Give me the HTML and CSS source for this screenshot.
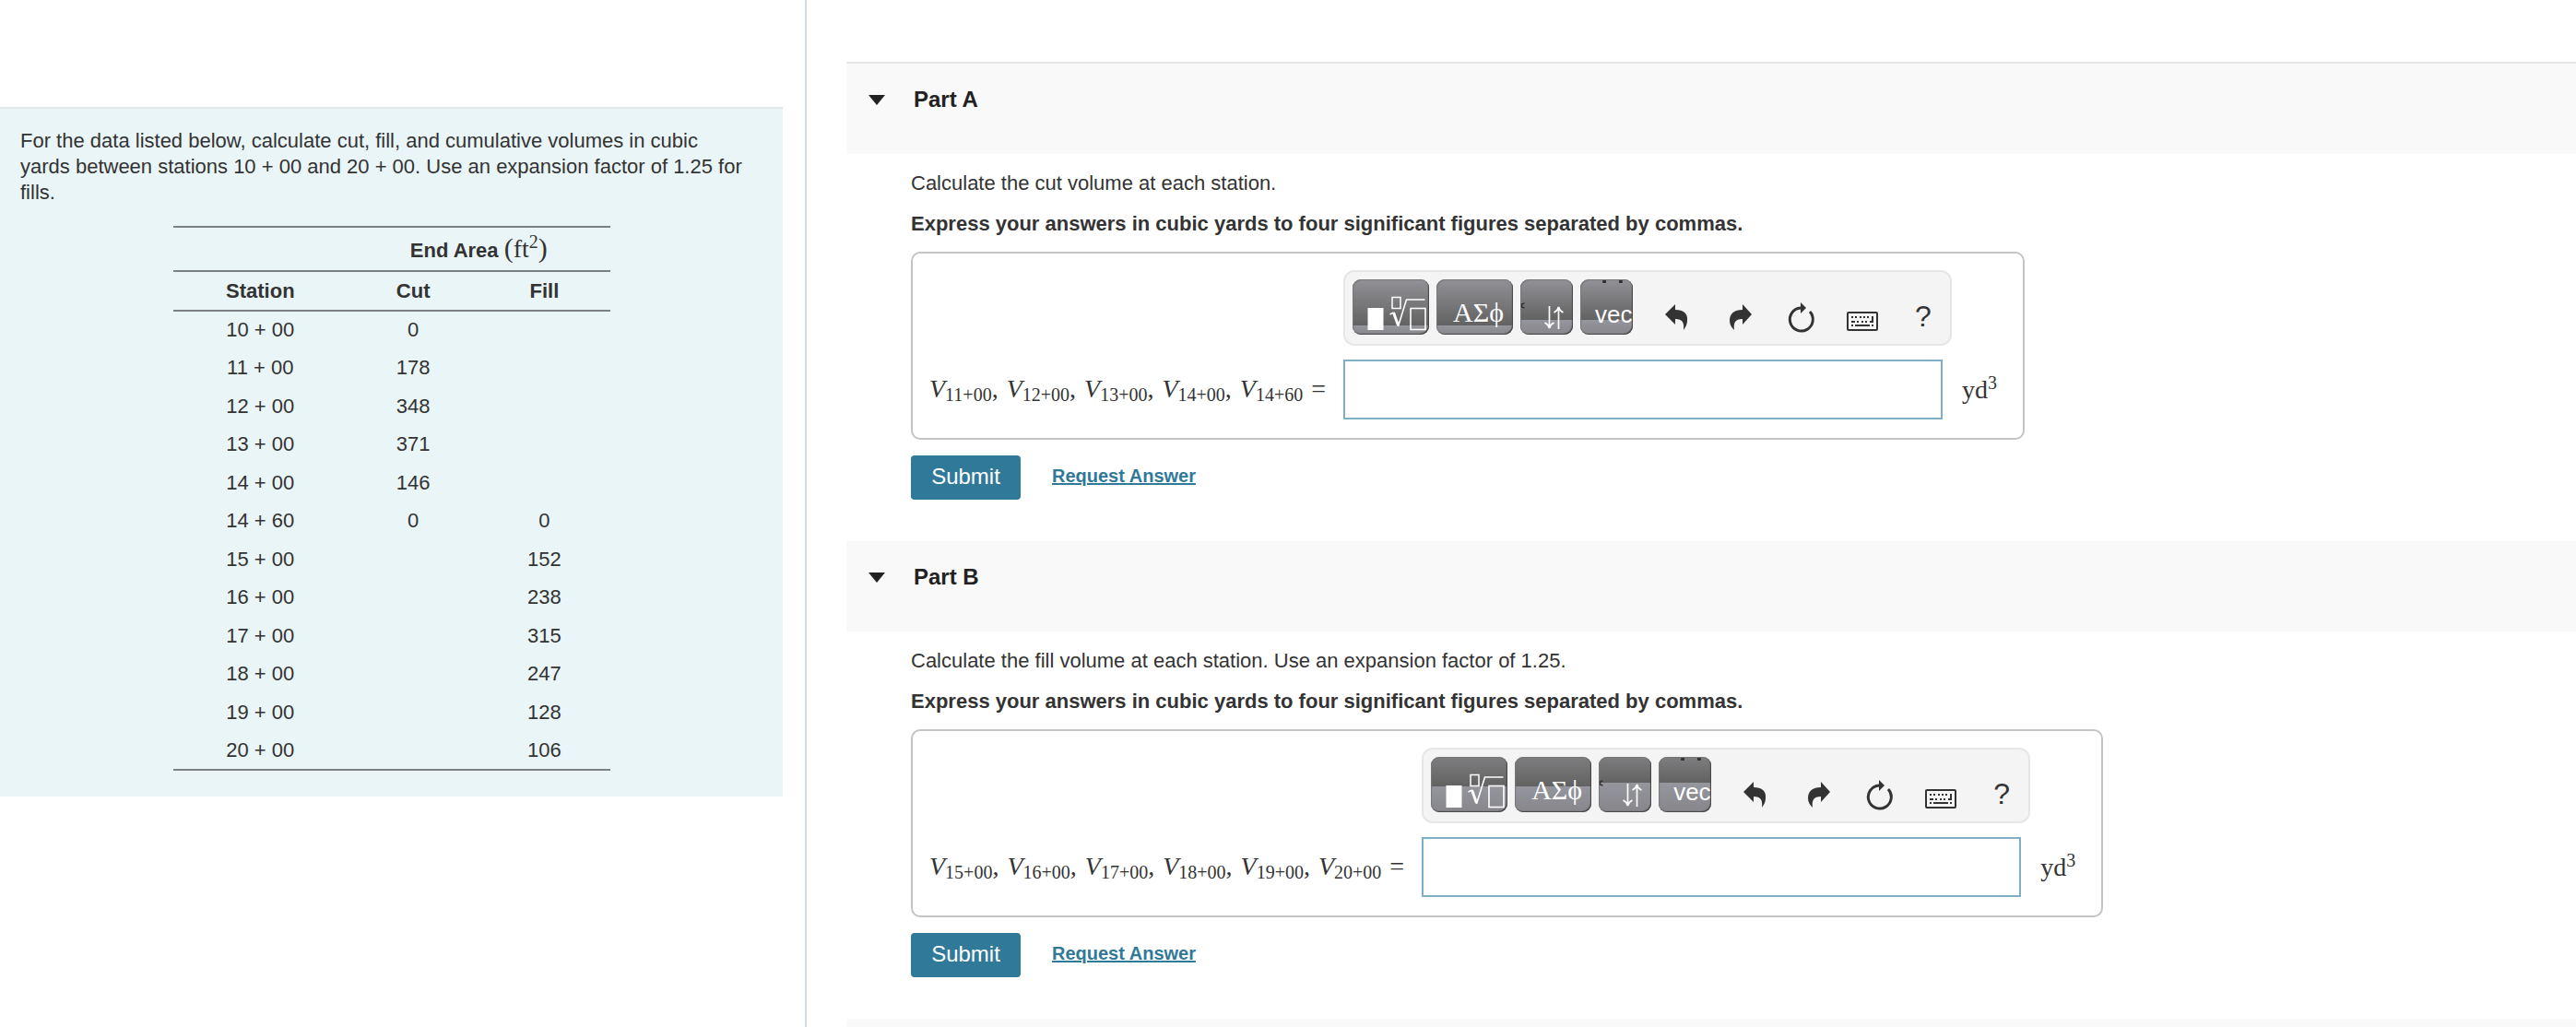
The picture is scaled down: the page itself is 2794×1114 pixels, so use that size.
FILE: index.html
```html
<!DOCTYPE html>
<html lang="en">
<head>
    <meta charset="UTF-8">
    <meta name="viewport" content="width=device-width, initial-scale=1.0">
    <title>Cut and Fill Volumes</title>
    <link rel="stylesheet" href="styles.css">
</head>
<body>
    <!-- shared toolbar icons -->
    <svg class="sprite" aria-hidden="true">
        <symbol id="icon-root" viewBox="0 0 82 60">
            <rect x="16" y="31" width="17" height="24" fill="#fff"/>
            <g fill="none" stroke="#fff">
                <rect x="42.5" y="19.5" width="9" height="12" stroke-width="1.5"/>
                <path d="M40 38l4-2" stroke-width="1.5"/>
                <path d="M44 36l5 14" stroke-width="3"/>
                <path d="M49 51l9-29h20" stroke-width="1.6"/>
                <rect x="62.5" y="31.5" width="16" height="23" stroke-width="1.6"/>
            </g>
        </symbol>
        <symbol id="icon-arrows" viewBox="0 0 56 60">
            <path d="M4 26l-3 1v3l3 1" fill="none" stroke="#333" stroke-width="1.4"/>
            <g fill="none" stroke="#fff" stroke-width="1.7">
                <path d="M31 29v24M26 47q4 2 5 6q1-4 5-6"/>
                <path d="M41 54V30M36 36q4-2 5-6q1 4 5 6"/>
            </g>
        </symbol>
        <symbol id="icon-undo" viewBox="0 0 50 60">
            <path d="M13 38L24 27v6c9 0 14 4 13 12c0 4-2 7-4 10c1-8-1-12-9-12v6z"/>
        </symbol>
        <symbol id="icon-redo" viewBox="0 0 50 60">
            <path d="M40 38L30 27v6c-9 0-14 4-14 12c0 4 2 7 5 10c-1-8 1-12 9-12v6z"/>
        </symbol>
        <symbol id="icon-reset" viewBox="0 0 50 60">
            <path d="M26 31a12.5 12.5 0 1 0 10 4" fill="none" stroke="#333" stroke-width="3"/>
            <path d="M26 25l6 6l-6 6z"/>
        </symbol>
        <symbol id="icon-keyboard" viewBox="0 0 50 60">
            <rect x="10" y="36" width="32" height="19" rx="1" fill="none" stroke="#333" stroke-width="2"/>
            <path d="M14 40h2v2h-2zM18 40h2v2h-2zM23 40h2v2h-2zM27 40h2v2h-2zM31 40h2v2h-2zM36 40h2v7h-4v-2h2zM14 45h4v2h-4zM20 45h2v2h-2zM25 45h2v2h-2zM29 45h2v2h-2zM14 49h2v2h-2zM18 49h16v2H18zM36 49h2v2h-2z"/>
        </symbol>
    </svg>

    <div class="page">
        <aside class="left-pane">
            <div class="problem">
                <p>For the data listed below, calculate cut, fill, and cumulative volumes in cubic yards between stations 10 + 00 and 20 + 00. Use an expansion factor of 1.25 for fills.</p>
                <table class="data-table">
                    <colgroup>
                        <col class="col-station">
                        <col>
                        <col>
                    </colgroup>
                    <thead>
                        <tr class="group-row">
                            <td></td>
                            <th colspan="2">End Area <span class="math"><span class="paren">(</span>ft<sup>2</sup><span class="paren">)</span></span></th>
                        </tr>
                        <tr class="head-row">
                            <th>Station</th>
                            <th>Cut</th>
                            <th>Fill</th>
                        </tr>
                    </thead>
                    <tbody>
                        <tr><td>10 + 00</td><td>0</td><td></td></tr>
                        <tr><td>11 + 00</td><td>178</td><td></td></tr>
                        <tr><td>12 + 00</td><td>348</td><td></td></tr>
                        <tr><td>13 + 00</td><td>371</td><td></td></tr>
                        <tr><td>14 + 00</td><td>146</td><td></td></tr>
                        <tr><td>14 + 60</td><td>0</td><td>0</td></tr>
                        <tr><td>15 + 00</td><td></td><td>152</td></tr>
                        <tr><td>16 + 00</td><td></td><td>238</td></tr>
                        <tr><td>17 + 00</td><td></td><td>315</td></tr>
                        <tr><td>18 + 00</td><td></td><td>247</td></tr>
                        <tr><td>19 + 00</td><td></td><td>128</td></tr>
                        <tr><td>20 + 00</td><td></td><td>106</td></tr>
                    </tbody>
                </table>
            </div>
        </aside>

        <main class="right-pane">
            <section class="part">
                <h2 class="part-header part-header-first">
                    <button class="part-toggle" aria-expanded="true"><span class="caret"></span>Part A</button>
                </h2>
                <div class="part-body">
                    <p>Calculate the cut volume at each station.</p>
                    <p class="instructions">Express your answers in cubic yards to four significant figures separated by commas.</p>
                    <div class="answer-box">
                        <label class="math formula" for="answer-a">
                            <span><i>V</i><sub>11+00</sub>,</span>
                            <span><i>V</i><sub>12+00</sub>,</span>
                            <span><i>V</i><sub>13+00</sub>,</span>
                            <span><i>V</i><sub>14+00</sub>,</span>
                            <span><i>V</i><sub>14+60</sub></span>
                            <span>=</span>
                        </label>
                        <div class="entry">
                            <div class="toolbar">
                                <button class="key key-wide" aria-label="Templates"><svg><use href="#icon-root"/></svg></button>
                                <button class="key key-wide key-symbols">ΑΣϕ</button>
                                <button class="key" aria-label="Arrows"><svg><use href="#icon-arrows"/></svg></button>
                                <button class="key key-vec">vec</button>
                                <div class="tools">
                                    <button class="tool" aria-label="Undo"><svg><use href="#icon-undo"/></svg></button>
                                    <button class="tool" aria-label="Redo"><svg><use href="#icon-redo"/></svg></button>
                                    <button class="tool" aria-label="Reset"><svg><use href="#icon-reset"/></svg></button>
                                    <button class="tool" aria-label="Keyboard shortcuts"><svg><use href="#icon-keyboard"/></svg></button>
                                    <button class="tool help">?</button>
                                </div>
                            </div>
                            <div class="input-row">
                                <input type="text" id="answer-a" class="answer-input">
                                <span class="math">yd<sup>3</sup></span>
                            </div>
                        </div>
                    </div>
                    <div class="actions">
                        <button class="submit-btn">Submit</button>
                        <a href="#" class="request-link">Request Answer</a>
                    </div>
                </div>
            </section>

            <section class="part">
                <h2 class="part-header">
                    <button class="part-toggle" aria-expanded="true"><span class="caret"></span>Part B</button>
                </h2>
                <div class="part-body">
                    <p>Calculate the fill volume at each station. Use an expansion factor of 1.25.</p>
                    <p class="instructions">Express your answers in cubic yards to four significant figures separated by commas.</p>
                    <div class="answer-box">
                        <label class="math formula" for="answer-b">
                            <span><i>V</i><sub>15+00</sub>,</span>
                            <span><i>V</i><sub>16+00</sub>,</span>
                            <span><i>V</i><sub>17+00</sub>,</span>
                            <span><i>V</i><sub>18+00</sub>,</span>
                            <span><i>V</i><sub>19+00</sub>,</span>
                            <span><i>V</i><sub>20+00</sub></span>
                            <span>=</span>
                        </label>
                        <div class="entry">
                            <div class="toolbar toolbar-mid">
                                <button class="key key-wide" aria-label="Templates"><svg><use href="#icon-root"/></svg></button>
                                <button class="key key-wide key-symbols">ΑΣϕ</button>
                                <button class="key" aria-label="Arrows"><svg><use href="#icon-arrows"/></svg></button>
                                <button class="key key-vec">vec</button>
                                <div class="tools">
                                    <button class="tool" aria-label="Undo"><svg><use href="#icon-undo"/></svg></button>
                                    <button class="tool" aria-label="Redo"><svg><use href="#icon-redo"/></svg></button>
                                    <button class="tool" aria-label="Reset"><svg><use href="#icon-reset"/></svg></button>
                                    <button class="tool" aria-label="Keyboard shortcuts"><svg><use href="#icon-keyboard"/></svg></button>
                                    <button class="tool help">?</button>
                                </div>
                            </div>
                            <div class="input-row">
                                <input type="text" id="answer-b" class="answer-input">
                                <span class="math">yd<sup>3</sup></span>
                            </div>
                        </div>
                    </div>
                    <div class="actions">
                        <button class="submit-btn">Submit</button>
                        <a href="#" class="request-link">Request Answer</a>
                    </div>
                </div>
            </section>

            <div class="next-part"></div>
        </main>
    </div>
</body>
</html>
```
FILE: styles.css
```css
* {
    box-sizing: border-box;
}
body {
    margin: 0;
    background: #fff;
    color: #333;
    font-family: "Liberation Sans", Arial, sans-serif;
    font-size: 22px;
    line-height: 28px;
}
p {
    margin: 0;
}
button {
    margin: 0;
    padding: 0;
    border: 0;
    background: none;
    color: inherit;
    font-family: inherit;
    cursor: pointer;
}
.sprite {
    display: none;
}
.page {
    display: grid;
    grid-template-columns: 875fr 1919fr;
    height: 100vh;
    overflow: hidden;
}

/* Problem statement */
.left-pane {
    padding: 116px 24px 0 0;
    border-right: 2px solid #d0dbe6;
}
.problem {
    padding: 21px 22px 28px;
    border-top: 2px solid #dde6e8;
    background: #eaf5f8;
}
.problem p {
    padding-right: 12px;
}
.data-table {
    width: 474px;
    margin: 22px auto 0;
    border-collapse: collapse;
    table-layout: fixed;
    text-align: center;
    border-bottom: 2px solid #7a8083;
}
.data-table th,
.data-table td {
    padding: 0;
}
.col-station {
    width: 40%;
}
.data-table tr {
    height: 41px;
}
.data-table tbody tr:nth-child(even) {
    height: 42px;
}
.data-table .group-row {
    height: 48px;
    border-top: 2px solid #7a8083;
    border-bottom: 2px solid #7a8083;
}
.data-table .head-row {
    height: 43px;
    border-bottom: 2px solid #7a8083;
}

/* Math text */
.math {
    font-family: "Liberation Serif", "Times New Roman", serif;
    font-size: 28px;
    font-weight: normal;
    white-space: nowrap;
}
.math sub,
.math sup {
    font-size: 20px;
    line-height: 0;
}
.math sub {
    vertical-align: -4px;
}
.math sup {
    vertical-align: 10px;
}
.paren {
    font-size: 30px;
}

/* Parts */
.right-pane {
    display: flex;
    flex-direction: column;
    padding: 67px 0 0 43px;
}
.part-header {
    margin: 0;
    height: 98px;
    padding: 25px 24px;
    background: #f9f9f9;
    font-size: 24px;
    line-height: 28px;
}
.part-header-first {
    height: 100px;
    border-top: 2px solid #e6e6e6;
}
.part-toggle {
    display: flex;
    align-items: center;
    gap: 31px;
    color: #222;
    font-size: 24px;
    font-weight: bold;
    line-height: 28px;
}
.caret {
    border-left: 9px solid transparent;
    border-right: 9px solid transparent;
    border-top: 11px solid #222;
}
.part-body {
    padding: 18px 24px 45px 70px;
}
.instructions {
    margin-top: 16px;
    font-weight: bold;
}
.answer-box {
    display: flex;
    width: fit-content;
    gap: 19px;
    margin-top: 16px;
    padding: 18px 28px 20px 18px;
    border: 2px solid #c4c4c4;
    border-radius: 10px;
}
.formula {
    display: flex;
    align-items: flex-end;
    gap: 9px;
    padding-bottom: 17px;
    line-height: 32px;
}
.entry {
    display: flex;
    flex-direction: column;
    align-items: flex-start;
    gap: 15px;
}
.input-row {
    display: flex;
    align-items: center;
    gap: 21px;
}
.answer-input {
    width: 650px;
    height: 65px;
    padding: 8px;
    border: 2px solid #7fafc5;
    background: #fff;
    font-size: 24px;
}

/* Equation toolbar */
.toolbar {
    --split: 83%;
    --split-small: 73%;
    --key-top: #929297;
    display: flex;
    gap: 8px;
    height: 82px;
    padding: 8px 4px 8px 8px;
    border: 2px solid #e6e6e6;
    border-radius: 12px;
    background: #f4f4f4;
}
.toolbar-mid {
    --split: 53%;
    --split-small: 47%;
    --key-top: #7e7e80;
}
.key {
    width: 57px;
    height: 60px;
    overflow: hidden;
    border-radius: 9px;
    background: linear-gradient(var(--key-top), #626262 var(--split-small), #95959e var(--split-small), #86868a);
    box-shadow: inset -1px -1px 1px #444, inset 1px 1px 1px #77777a;
    color: #fff;
}
.key-wide {
    width: 83px;
    background: linear-gradient(var(--key-top), #626262 var(--split), #95959e var(--split), #86868a);
}
.key svg {
    display: block;
    width: 100%;
    height: 100%;
}
.key-symbols {
    padding: 12px 0 0 18px;
    font-family: "Liberation Serif", "DejaVu Serif", serif;
    font-size: 30px;
    text-align: left;
}
.key-vec {
    position: relative;
    padding: 16px 0 0 16px;
    font-size: 26px;
    text-align: left;
}
.key-vec::before {
    content: "";
    position: absolute;
    top: 1px;
    left: 24px;
    width: 14px;
    height: 3px;
    border: solid #333;
    border-width: 0 4px;
    border-radius: 1px;
}
.tools {
    display: flex;
    gap: 17px;
    margin-left: 14px;
}
.tool {
    width: 50px;
    height: 60px;
}
.tool svg {
    display: block;
    width: 50px;
    height: 60px;
    fill: #333;
}
.help {
    padding-top: 20px;
    font-size: 32px;
}

/* Buttons under the answer box */
.actions {
    display: flex;
    align-items: center;
    gap: 34px;
    margin-top: 17px;
}
.submit-btn {
    width: 119px;
    height: 48px;
    padding-bottom: 2px;
    border-radius: 4px;
    background: #317999;
    color: #fff;
    font-size: 24px;
}
.request-link {
    padding-bottom: 5px;
    color: #317999;
    font-size: 20px;
    font-weight: bold;
}
.next-part {
    flex: 1;
    background: #f9f9f9;
}
```
